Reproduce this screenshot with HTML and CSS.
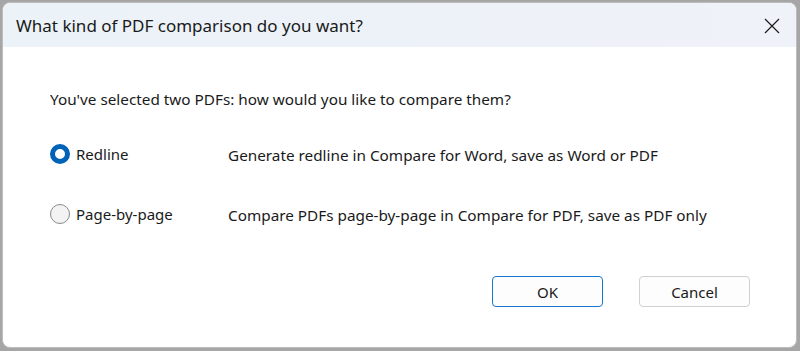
FILE: index.html
```html
<!DOCTYPE html>
<html>
<head>
<meta charset="utf-8">
<link rel="stylesheet" href="styles.css">
</head>
<body>
<div class="window">
  <div class="titlebar">
    <div class="title">What kind of PDF comparison do you want?</div>
    <div class="close">
      <svg width="16" height="16" viewBox="0 0 16 16"><path d="M1 1 L15 15 M15 1 L1 15" stroke="#1a1a1a" stroke-width="1.2" fill="none"/></svg>
    </div>
  </div>
  <div class="content">
    <p class="prompt">You've selected two PDFs: how would you like to compare them?</p>
    <div class="options">
      <label class="option">
        <span class="radio checked"></span>
        <span class="name">Redline</span>
        <span class="desc">Generate redline in Compare for Word, save as Word or PDF</span>
      </label>
      <label class="option">
        <span class="radio"></span>
        <span class="name">Page-by-page</span>
        <span class="desc">Compare PDFs page-by-page in Compare for PDF, save as PDF only</span>
      </label>
    </div>
    <div class="buttons">
      <button class="btn primary">OK</button>
      <button class="btn">Cancel</button>
    </div>
  </div>
</div>
</body>
</html>
```
FILE: styles.css
```css
html, body {
  margin: 0;
  padding: 0;
  background: #a6a6a6;
  width: 800px;
  height: 351px;
  overflow: hidden;
}
body {
  font-family: "Noto Sans", "Open Sans", sans-serif;
  color: #1a1a1a;
}
.window {
  margin: 2px 0 0 2px;
  width: 795px;
  height: 346px;
  background: #fff;
  border-radius: 8px;
  overflow: hidden;
  display: flex;
  flex-direction: column;
  box-sizing: border-box;
  border: 1px solid #bdbdbd;
}
.titlebar {
  height: 44px;
  flex: none;
  background: linear-gradient(90deg, #ebf2f8, #eff2f8);
  display: flex;
  align-items: center;
  justify-content: space-between;
  padding: 0 9px 0 13px;
}
.title {
  font-size: 17px;
  color: #1a1a1a;
  padding-top: 1px;
}
.close {
  width: 30px;
  height: 30px;
  display: flex;
  align-items: center;
  justify-content: center;
  margin-top: 2px;
}
.content {
  padding: 0 0 0 47px;
  display: flex;
  flex-direction: column;
  flex: 1;
}
.prompt {
  margin: 42px 0 0;
  font-size: 15.3px;
  line-height: 20px;
}
.options {
  margin-top: 34px;
  display: flex;
  flex-direction: column;
  gap: 38px;
}
.option {
  display: flex;
  align-items: center;
  font-size: 15px;
  line-height: 20px;
}
.radio {
  width: 20px;
  height: 20px;
  box-sizing: border-box;
  border-radius: 50%;
  border: 1px solid #8a8a8a;
  background: #f3f3f3;
  flex: none;
}
.radio.checked {
  border: 5px solid #0063b8;
  background: #fff;
}
.name {
  margin-left: 6px;
  width: 152px;
}
.desc {
  font-size: 15.3px;
  padding-top: 2px;
}
.buttons {
  margin-top: 51px;
  display: flex;
  gap: 36px;
  padding-left: 442px;
}
.btn {
  width: 111px;
  height: 31px;
  box-sizing: border-box;
  border: 1px solid #d0d0d0;
  border-radius: 4px;
  background: #fdfdfd;
  font-family: "Noto Sans", "Open Sans", sans-serif;
  font-size: 15px;
  color: #1a1a1a;
  padding: 0;
}
.btn.primary {
  border-color: #1776cf;
}
```
